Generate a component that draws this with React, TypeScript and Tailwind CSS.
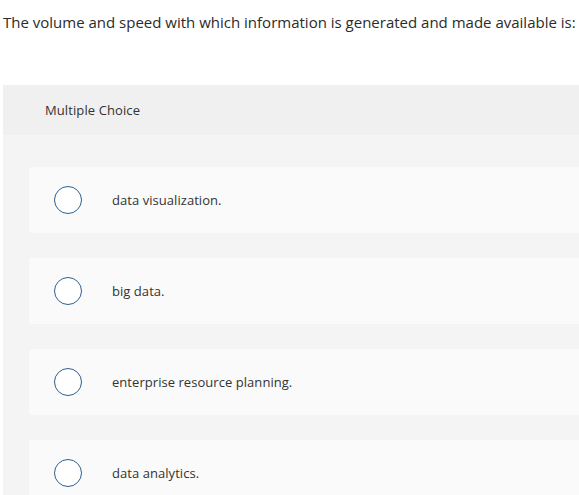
import React from "react";

const options = [
  "data visualization.",
  "big data.",
  "enterprise resource planning.",
  "data analytics.",
];

export default function App() {
  return (
    <div
      className="w-[579px] h-[495px] bg-white overflow-hidden text-[#2b2b2b]"
      style={{ fontFamily: "'Open Sans', Lato, sans-serif" }}
    >
      <p className="pl-[3px] pt-[12px] text-[15px] leading-[20px] whitespace-nowrap">
        The volume and speed with which information is generated and made available is:
      </p>
      <div className="ml-[3px] mt-[53px] bg-[#f4f4f4] pb-[40px]">
        <div className="h-[50px] bg-[#f0f0f0] pl-[42px] pt-[2px] flex items-center text-[13px] tracking-[0.1px] text-[#333]">
          Multiple Choice
        </div>
        <div className="pl-[26px] pt-[32px] flex flex-col gap-[25px]">
          {options.map((o) => (
            <div
              key={o}
              className="h-[66px] bg-[#fafafa] rounded-l-[3px] flex items-center pl-[25px]"
            >
              <div className="w-[28px] h-[28px] rounded-full border-[1.5px] border-[#2d5f8f] bg-white shrink-0" />
              <span className="ml-[30px] mt-[2px] text-[13px] tracking-[0.05px] text-[#333]">{o}</span>
            </div>
          ))}
        </div>
      </div>
    </div>
  );
}
